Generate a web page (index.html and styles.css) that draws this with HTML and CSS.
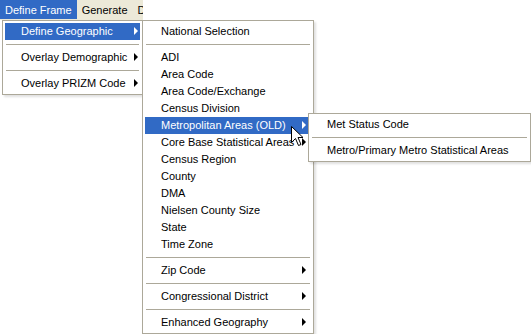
FILE: index.html
```html
<!DOCTYPE html>
<html>
<head>
<meta charset="utf-8">
<link rel="stylesheet" href="styles.css">
</head>
<body>
<div class="screen">
  <div class="menubar">
    <span class="mb-item active">Define Frame</span>
    <span class="mb-item">Generate</span>
    <span class="mb-item">De</span>
  </div>

  <div class="menu m1">
    <div class="item hl"><span class="label">Define Geographic</span><span class="arrow"></span></div>
    <div class="sep"></div>
    <div class="item"><span class="label">Overlay Demographic</span><span class="arrow"></span></div>
    <div class="sep"></div>
    <div class="item"><span class="label">Overlay PRIZM Code</span><span class="arrow"></span></div>
  </div>

  <div class="menu m2">
    <div class="item"><span class="label">National Selection</span></div>
    <div class="sep"></div>
    <div class="item"><span class="label">ADI</span></div>
    <div class="item"><span class="label">Area Code</span></div>
    <div class="item"><span class="label">Area Code/Exchange</span></div>
    <div class="item"><span class="label">Census Division</span></div>
    <div class="item hl"><span class="label">Metropolitan Areas (OLD)</span><span class="arrow"></span></div>
    <div class="item"><span class="label">Core Base Statistical Areas</span><span class="arrow"></span></div>
    <div class="item"><span class="label">Census Region</span></div>
    <div class="item"><span class="label">County</span></div>
    <div class="item"><span class="label">DMA</span></div>
    <div class="item"><span class="label">Nielsen County Size</span></div>
    <div class="item"><span class="label">State</span></div>
    <div class="item"><span class="label">Time Zone</span></div>
    <div class="sep"></div>
    <div class="item"><span class="label">Zip Code</span><span class="arrow"></span></div>
    <div class="sep"></div>
    <div class="item"><span class="label">Congressional District</span><span class="arrow"></span></div>
    <div class="sep"></div>
    <div class="item"><span class="label">Enhanced Geography</span><span class="arrow"></span></div>
  </div>

  <div class="menu m3">
    <div class="item"><span class="label">Met Status Code</span></div>
    <div class="sep"></div>
    <div class="item"><span class="label">Metro/Primary Metro Statistical Areas</span></div>
  </div>

  <svg class="cursor" width="13" height="21" viewBox="0 0 13 21">
    <path d="M0.5 0.5 L0.5 16.5 L4.5 12.5 L7.5 19.5 L10 18.5 L7 11.5 L12 11.5 Z" fill="#fff" stroke="#000" stroke-width="1" stroke-linejoin="miter"/>
  </svg>
</div>
</body>
</html>
```

FILE: styles.css
```css
html, body {
  margin: 0;
  padding: 0;
  background: #ffffff;
}

.screen {
  position: relative;
  width: 531px;
  height: 334px;
  overflow: hidden;
  font-family: "Liberation Sans", Arial, sans-serif;
  font-size: 11px;
  color: #000;
}

.menubar {
  display: flex;
  width: 143px;
  height: 20px;
  background: #ece9d8;
  overflow: hidden;
  white-space: nowrap;
}

.mb-item {
  display: flex;
  align-items: center;
  padding: 0 5px 0 5px;
  height: 19px;
}

.mb-item.active {
  background: #316ac5;
  color: #fff;
}

.menu {
  position: absolute;
  box-sizing: border-box;
  background: #fff;
  border: 1px solid #aca899;
  padding: 2px;
  box-shadow: 2px 2px 2px rgba(0, 0, 0, 0.12);
  display: flex;
  flex-direction: column;
}

.m1 { left: 2px; top: 20px; width: 141px; }
.m2 { left: 142px; top: 20px; width: 172px; }
.m3 { left: 308px; top: 113px; width: 223px; }

.item {
  display: flex;
  align-items: center;
  box-sizing: border-box;
  height: 17px;
  padding-left: 16px;
  padding-right: 5px;
  padding-bottom: 1px;
  white-space: nowrap;
}

.m1 .item {
  padding-right: 2px;
}

.item .label {
  flex: 1;
}

.item.hl {
  background: #316ac5;
  color: #fff;
}

.arrow {
  width: 0;
  height: 0;
  border-left: 4px solid #000;
  border-top: 4px solid transparent;
  border-bottom: 4px solid transparent;
}

.item.hl .arrow {
  border-left-color: #fff;
}

.sep {
  height: 9px;
  display: flex;
  align-items: center;
}

.sep::before {
  content: "";
  flex: 1;
  height: 1px;
  margin: 0 1px;
  background: #aca899;
}

.cursor {
  position: absolute;
  left: 291px;
  top: 126px;
}
```
